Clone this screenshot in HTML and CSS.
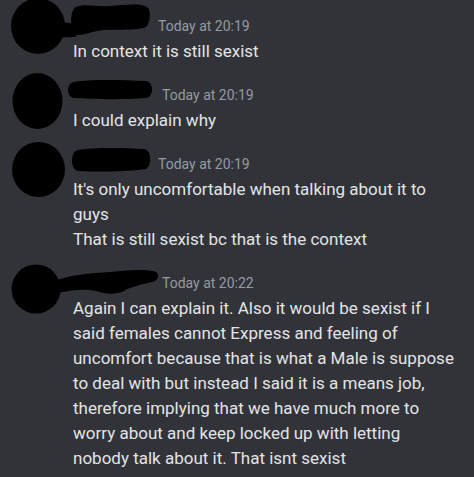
FILE: index.html
```html
<!DOCTYPE html>
<html lang="en">
<head>
  <meta charset="UTF-8">
  <title>Chat</title>
  <link rel="stylesheet" href="styles.css">
</head>
<body>

  <div class="chat">

    <div class="msg">
      <svg class="redact" width="170" height="70" viewBox="0 0 170 70">
        <ellipse cx="38" cy="31" rx="27" ry="28"/>
        <path d="M55 30 C62 26 68 28 74 29 L76 42 C68 42 62 43 56 42 Z"/>
        <path d="M76 12 C84 8 96 12 110 11 C126 10 140 8 147 12 C152 16 150 28 146 32 C136 36 120 34 104 35 C92 36 82 41 76 40 C70 38 69 16 76 12 Z"/>
      </svg>
      <div class="head"><span class="name"></span><span class="time">Today at 20:19</span></div>
      <div class="text">In context it is still sexist</div>
    </div>

    <div class="msg">
      <svg class="redact" width="170" height="70" viewBox="0 0 170 70">
        <ellipse cx="37.5" cy="37" rx="25" ry="28"/>
        <path d="M74 18 C90 15 120 16 146 17 C154 18 154 33 146 34 C120 36 92 35 74 34 C66 33 66 19 74 18 Z"/>
      </svg>
      <div class="head"><span class="name wide"></span><span class="time">Today at 20:19</span></div>
      <div class="text">I could explain why</div>
    </div>

    <div class="msg">
      <svg class="redact" width="170" height="70" viewBox="0 0 170 70">
        <ellipse cx="38.5" cy="36.5" rx="26.5" ry="27.5"/>
        <path d="M78 17 C96 14 124 15 144 16 C152 17 152 33 146 36 C124 39 96 39 78 38 C70 37 70 18 78 17 Z"/>
      </svg>
      <div class="head"><span class="name"></span><span class="time">Today at 20:19</span></div>
      <div class="text">It's only uncomfortable when talking about it to guys<br>That is still sexist bc that is the context</div>
    </div>

    <div class="msg">
      <svg class="redact" width="170" height="70" viewBox="0 0 170 70">
        <ellipse cx="36" cy="37" rx="24.5" ry="24.5"/>
        <path d="M54 29 C70 23 90 21 110 20 C130 18 148 17 156 20 C160 23 158 29 152 30 C140 33 130 35 124 39 C116 43 104 42 96 39 C84 36 70 39 56 41 Z"/>
      </svg>
      <div class="head"><span class="name wide"></span><span class="time">Today at 20:22</span></div>
      <div class="text">Again I can explain it. Also it would be sexist if I said females cannot Express and feeling of uncomfort because that is what a Male is suppose to deal with but instead I said it is a means job, therefore implying that we have much more to worry about and keep locked up with letting nobody talk about it. That isnt sexist</div>
    </div>

  </div>

</body>
</html>
```

FILE: styles.css
```css
body {
  margin: 0;
  background-color: #313338;
  font-family: Roboto, "Noto Sans", sans-serif;
  color: #e2e4e7;
}

.chat {
  padding: 15px 14px 0 0;
}

.msg {
  position: relative;
  padding-left: 73px;
  margin-bottom: 20px;
}

.redact {
  position: absolute;
  left: 0;
  top: -20px;
  fill: #000;
}

.head {
  height: 22px;
  line-height: 22px;
  display: flex;
  align-items: center;
}

.name {
  display: inline-block;
  width: 77px;
  margin-right: 8px;
}

.name.wide {
  width: 81px;
}

.time {
  font-size: 14px;
  color: #949ba4;
}

.text {
  margin-top: 2px;
  font-size: 17px;
  line-height: 25px;
}
```
